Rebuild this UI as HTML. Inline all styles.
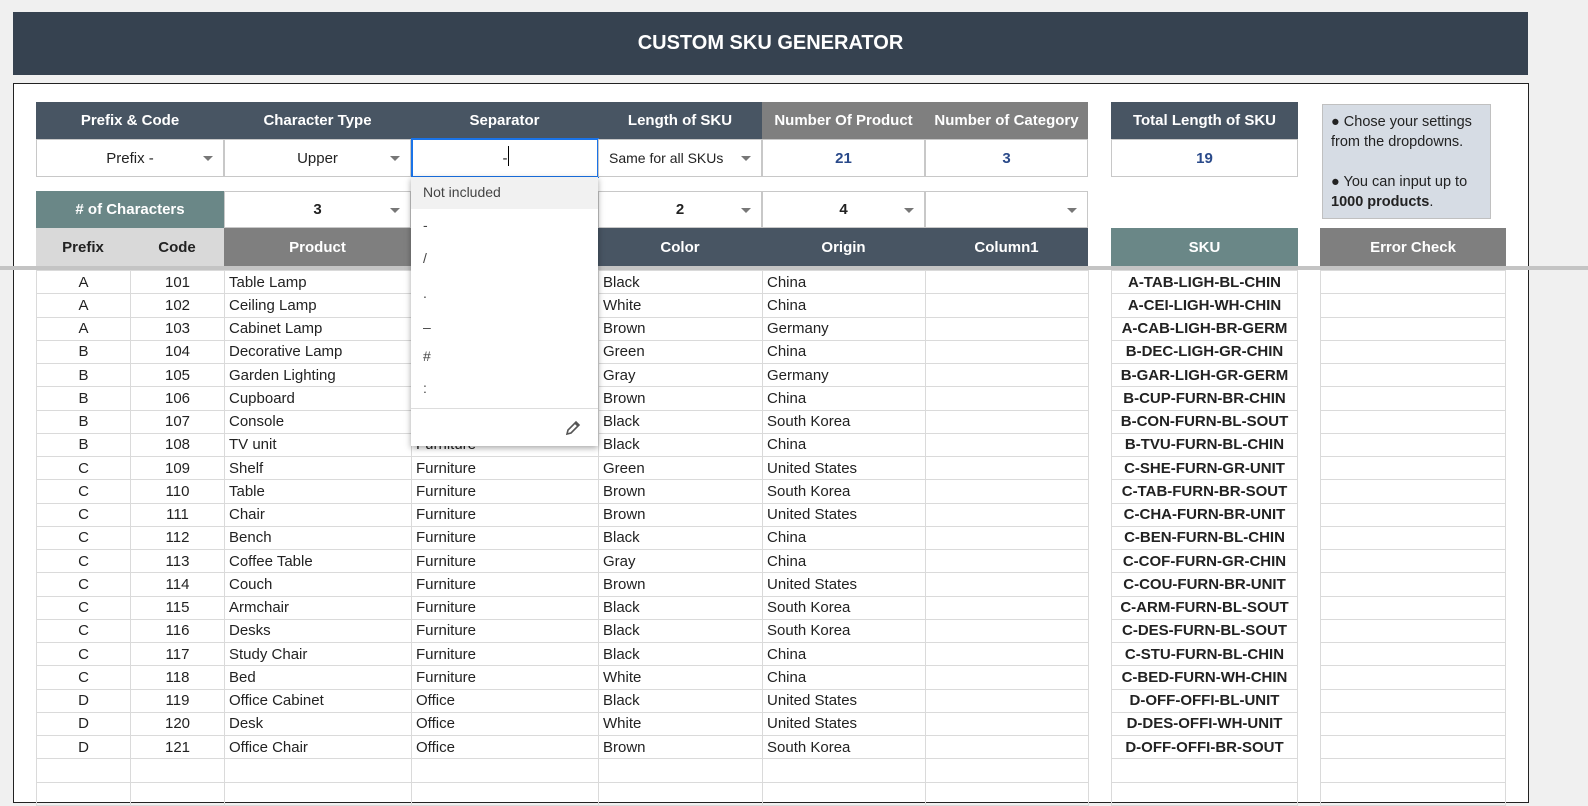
<!DOCTYPE html>
<html><head><meta charset="utf-8"><style>
*{box-sizing:border-box;margin:0;padding:0}
body{width:1588px;height:794px;overflow:hidden;background:#f0f0f0;font-family:"Liberation Sans",Arial,sans-serif;position:relative;color:#222}
.abs{position:absolute}
#title{left:13px;top:12px;width:1515px;height:63px;background:#364250;color:#fff;font-weight:bold;font-size:20px;display:flex;align-items:center;justify-content:center}
#panel{left:13px;top:83px;width:1516px;height:720px;background:#fff;border:1px solid #222}
.c{position:absolute;display:flex;align-items:center;justify-content:center;font-size:15px}
.h{color:#fff;font-weight:bold}
.dk{background:#485563}.gr{background:#7f7f7f}.tl{background:#6a8787}.lg{background:#d9d9d9;color:#222;font-weight:bold}
.wb{background:#fff;border:1px solid #c8c8c8}
.arr{position:absolute;right:10px;top:50%;margin-top:-2px;width:0;height:0;border-left:5px solid transparent;border-right:5px solid transparent;border-top:5px solid #777}
table{border-collapse:collapse;position:absolute;table-layout:fixed}
td{border:1px solid #dadada;font-size:15px;height:23.25px;padding:0 4px;white-space:nowrap;overflow:hidden}
td.cn{text-align:center}
.sku td{font-weight:bold;text-align:center}
#frz{left:0;top:266px;width:1588px;height:4px;background:#c4c4c4}
#dd{left:411px;top:177px;width:187px;height:269px;background:#fff;box-shadow:0 2px 6px rgba(0,0,0,.35);font-size:14px;color:#444}
#dd div.it{position:absolute;left:12px}
</style></head><body>
<div id="title" class="abs">CUSTOM SKU GENERATOR</div>
<div id="panel" class="abs"></div>

<div class="c h dk" style="left:36px;top:102px;width:188px;height:37px">Prefix &amp; Code</div>
<div class="c h dk" style="left:224px;top:102px;width:187px;height:37px">Character Type</div>
<div class="c h dk" style="left:411px;top:102px;width:187px;height:37px">Separator</div>
<div class="c h dk" style="left:598px;top:102px;width:164px;height:37px">Length of SKU</div>
<div class="c h gr" style="left:762px;top:102px;width:163px;height:37px">Number Of Product</div>
<div class="c h gr" style="left:925px;top:102px;width:163px;height:37px">Number of Category</div>
<div class="c h dk" style="left:1111px;top:102px;width:187px;height:37px">Total Length of SKU</div>

<div class="c wb" style="left:36px;top:139px;width:188px;height:38px">Prefix -<span class="arr"></span></div>
<div class="c wb" style="left:224px;top:139px;width:187px;height:38px">Upper<span class="arr"></span></div>
<div class="c" style="left:411px;top:138px;width:188px;height:40px;border:2px solid #1a73e8;background:#fff">-<span style="position:absolute;left:95px;top:6px;width:1px;height:20px;background:#000"></span></div>
<div class="c wb" style="left:598px;top:139px;width:164px;height:38px;font-size:14px;justify-content:flex-start;padding-left:10px">Same for all SKUs<span class="arr"></span></div>
<div class="c wb" style="left:762px;top:139px;width:163px;height:38px;color:#2a4a8a;font-weight:bold">21</div>
<div class="c wb" style="left:925px;top:139px;width:163px;height:38px;color:#2a4a8a;font-weight:bold">3</div>
<div class="c wb" style="left:1111px;top:139px;width:187px;height:38px;color:#2a4a8a;font-weight:bold">19</div>

<div class="abs" style="left:1322px;top:104px;width:169px;height:115px;background:#d6dce4;border:1px solid #c0c0c0;font-size:14.5px;line-height:20px;padding:7px 8px">● Chose your settings from the dropdowns.<br><br>● You can input up to <b>1000 products</b>.</div>

<div class="c h tl" style="left:36px;top:191px;width:188px;height:37px">#&nbsp;of Characters</div>
<div class="c wb" style="left:224px;top:191px;width:187px;height:37px;font-weight:bold">3<span class="arr"></span></div>
<div class="c wb" style="left:598px;top:191px;width:164px;height:37px;font-weight:bold">2<span class="arr"></span></div>
<div class="c wb" style="left:762px;top:191px;width:163px;height:37px;font-weight:bold">4<span class="arr"></span></div>
<div class="c wb" style="left:925px;top:191px;width:163px;height:37px"><span class="arr"></span></div>

<div class="c lg" style="left:36px;top:228px;width:94px;height:38px">Prefix</div>
<div class="c lg" style="left:130px;top:228px;width:94px;height:38px">Code</div>
<div class="c h gr" style="left:224px;top:228px;width:187px;height:38px">Product</div>
<div class="c h gr" style="left:411px;top:228px;width:187px;height:38px">Category</div>
<div class="c h dk" style="left:598px;top:228px;width:164px;height:38px">Color</div>
<div class="c h dk" style="left:762px;top:228px;width:163px;height:38px">Origin</div>
<div class="c h dk" style="left:925px;top:228px;width:163px;height:38px">Column1</div>
<div class="c h tl" style="left:1111px;top:228px;width:187px;height:38px">SKU</div>
<div class="c h gr" style="left:1320px;top:228px;width:186px;height:38px">Error Check</div>

<div id="frz" class="abs"></div>

<table style="left:36px;top:270px;width:1052px">
<colgroup><col style="width:94px"><col style="width:94px"><col style="width:187px"><col style="width:187px"><col style="width:164px"><col style="width:163px"><col style="width:163px"></colgroup>
<tr><td class="cn">A</td><td class="cn">101</td><td>Table Lamp</td><td>Lighting</td><td>Black</td><td>China</td><td></td></tr>
<tr><td class="cn">A</td><td class="cn">102</td><td>Ceiling Lamp</td><td>Lighting</td><td>White</td><td>China</td><td></td></tr>
<tr><td class="cn">A</td><td class="cn">103</td><td>Cabinet Lamp</td><td>Lighting</td><td>Brown</td><td>Germany</td><td></td></tr>
<tr><td class="cn">B</td><td class="cn">104</td><td>Decorative Lamp</td><td>Lighting</td><td>Green</td><td>China</td><td></td></tr>
<tr><td class="cn">B</td><td class="cn">105</td><td>Garden Lighting</td><td>Lighting</td><td>Gray</td><td>Germany</td><td></td></tr>
<tr><td class="cn">B</td><td class="cn">106</td><td>Cupboard</td><td>Furniture</td><td>Brown</td><td>China</td><td></td></tr>
<tr><td class="cn">B</td><td class="cn">107</td><td>Console</td><td>Furniture</td><td>Black</td><td>South Korea</td><td></td></tr>
<tr><td class="cn">B</td><td class="cn">108</td><td>TV unit</td><td>Furniture</td><td>Black</td><td>China</td><td></td></tr>
<tr><td class="cn">C</td><td class="cn">109</td><td>Shelf</td><td>Furniture</td><td>Green</td><td>United States</td><td></td></tr>
<tr><td class="cn">C</td><td class="cn">110</td><td>Table</td><td>Furniture</td><td>Brown</td><td>South Korea</td><td></td></tr>
<tr><td class="cn">C</td><td class="cn">111</td><td>Chair</td><td>Furniture</td><td>Brown</td><td>United States</td><td></td></tr>
<tr><td class="cn">C</td><td class="cn">112</td><td>Bench</td><td>Furniture</td><td>Black</td><td>China</td><td></td></tr>
<tr><td class="cn">C</td><td class="cn">113</td><td>Coffee Table</td><td>Furniture</td><td>Gray</td><td>China</td><td></td></tr>
<tr><td class="cn">C</td><td class="cn">114</td><td>Couch</td><td>Furniture</td><td>Brown</td><td>United States</td><td></td></tr>
<tr><td class="cn">C</td><td class="cn">115</td><td>Armchair</td><td>Furniture</td><td>Black</td><td>South Korea</td><td></td></tr>
<tr><td class="cn">C</td><td class="cn">116</td><td>Desks</td><td>Furniture</td><td>Black</td><td>South Korea</td><td></td></tr>
<tr><td class="cn">C</td><td class="cn">117</td><td>Study Chair</td><td>Furniture</td><td>Black</td><td>China</td><td></td></tr>
<tr><td class="cn">C</td><td class="cn">118</td><td>Bed</td><td>Furniture</td><td>White</td><td>China</td><td></td></tr>
<tr><td class="cn">D</td><td class="cn">119</td><td>Office Cabinet</td><td>Office</td><td>Black</td><td>United States</td><td></td></tr>
<tr><td class="cn">D</td><td class="cn">120</td><td>Desk</td><td>Office</td><td>White</td><td>United States</td><td></td></tr>
<tr><td class="cn">D</td><td class="cn">121</td><td>Office Chair</td><td>Office</td><td>Brown</td><td>South Korea</td><td></td></tr>
<tr><td></td><td></td><td></td><td></td><td></td><td></td><td></td></tr>
<tr><td></td><td></td><td></td><td></td><td></td><td></td><td></td></tr>
</table>

<table class="sku" style="left:1111px;top:270px;width:187px">
<tr><td>A-TAB-LIGH-BL-CHIN</td></tr><tr><td>A-CEI-LIGH-WH-CHIN</td></tr><tr><td>A-CAB-LIGH-BR-GERM</td></tr><tr><td>B-DEC-LIGH-GR-CHIN</td></tr><tr><td>B-GAR-LIGH-GR-GERM</td></tr><tr><td>B-CUP-FURN-BR-CHIN</td></tr><tr><td>B-CON-FURN-BL-SOUT</td></tr><tr><td>B-TVU-FURN-BL-CHIN</td></tr><tr><td>C-SHE-FURN-GR-UNIT</td></tr><tr><td>C-TAB-FURN-BR-SOUT</td></tr><tr><td>C-CHA-FURN-BR-UNIT</td></tr><tr><td>C-BEN-FURN-BL-CHIN</td></tr><tr><td>C-COF-FURN-GR-CHIN</td></tr><tr><td>C-COU-FURN-BR-UNIT</td></tr><tr><td>C-ARM-FURN-BL-SOUT</td></tr><tr><td>C-DES-FURN-BL-SOUT</td></tr><tr><td>C-STU-FURN-BL-CHIN</td></tr><tr><td>C-BED-FURN-WH-CHIN</td></tr><tr><td>D-OFF-OFFI-BL-UNIT</td></tr><tr><td>D-DES-OFFI-WH-UNIT</td></tr><tr><td>D-OFF-OFFI-BR-SOUT</td></tr><tr><td></td></tr><tr><td></td></tr>
</table>

<table style="left:1320px;top:270px;width:186px">
<tr><td></td></tr><tr><td></td></tr><tr><td></td></tr><tr><td></td></tr><tr><td></td></tr><tr><td></td></tr><tr><td></td></tr><tr><td></td></tr><tr><td></td></tr><tr><td></td></tr><tr><td></td></tr><tr><td></td></tr><tr><td></td></tr><tr><td></td></tr><tr><td></td></tr><tr><td></td></tr><tr><td></td></tr><tr><td></td></tr><tr><td></td></tr><tr><td></td></tr><tr><td></td></tr><tr><td></td></tr><tr><td></td></tr>
</table>

<div id="dd" class="abs">
<div class="abs" style="left:0;top:0;width:187px;height:32px;background:#f1f1f1"></div>
<div class="it" style="top:7px">Not included</div>
<div class="it" style="top:40px">-</div>
<div class="it" style="top:73px">/</div>
<div class="it" style="top:108px">.</div>
<div class="it" style="top:142px">–</div>
<div class="it" style="top:171px">#</div>
<div class="it" style="top:203px">:</div>
<div class="abs" style="left:0;top:231px;width:187px;height:1px;background:#ddd"></div>
<svg class="abs" style="left:153px;top:242px" width="18" height="18" viewBox="0 0 18 18"><path d="M3 15 L4 11 L12 3 L15 6 L7 14 Z M11 4 L14 7" fill="none" stroke="#555" stroke-width="1.6"/></svg>
</div>
</body></html>
